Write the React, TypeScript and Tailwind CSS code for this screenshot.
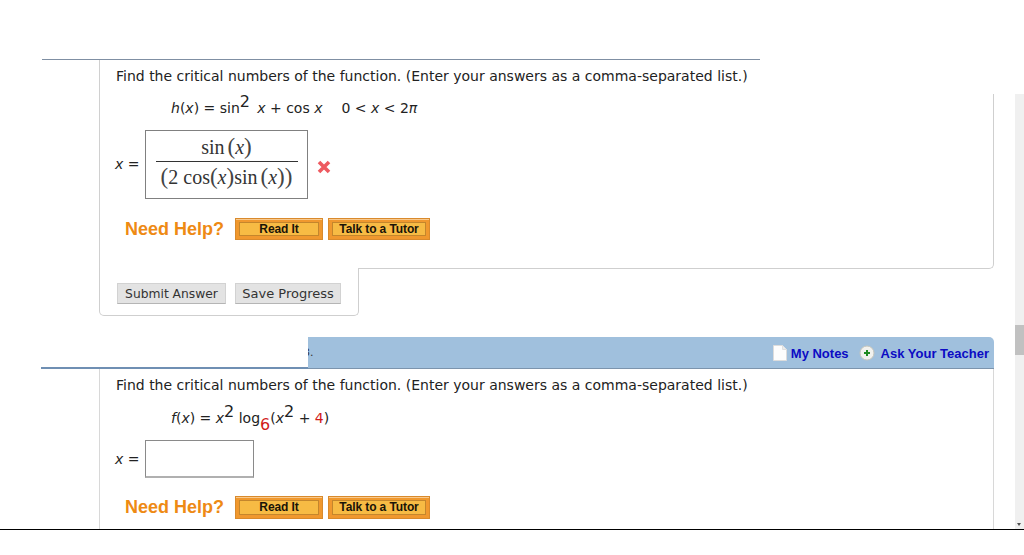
import React from 'react';

const sans = 'font-["DejaVu_Sans",sans-serif]';
const serif = 'font-["Liberation_Serif",serif]';
const arial = 'font-["Liberation_Sans",sans-serif]';

function OrangeButton({ label, width, height }: { label: string; width: string; height: string }) {
  return (
    <span className={`${width} ${height} flex p-[3px] bg-[#f0982e] border border-[#d98a2c] shadow-[inset_0_1px_0_#f8c98e]`}>
      <span className={`flex-1 flex items-center justify-center bg-[#f7bb44] border border-[#c4862c] text-[12px] tracking-[-0.1px] font-bold text-[#1a1408] ${arial}`}>
        {label}
      </span>
    </span>
  );
}

function NeedHelp({ height }: { height: string }) {
  return (
    <div className="flex items-center ml-[25px]">
      <span className={`w-[110px] mt-[1px] text-[18px] font-bold text-[#ee8a14] ${arial}`}>Need Help?</span>
      <OrangeButton label="Read It" width="w-[88px]" height={height} />
      <span className="w-[5px]" />
      <OrangeButton label="Talk to a Tutor" width="w-[102px]" height={height} />
    </div>
  );
}

function Prompt() {
  return (
    <p className={`ml-[16px] text-[14px] leading-[18px] text-[#222] ${sans}`}>
      Find the critical numbers of the function. (Enter your answers as a comma-separated list.)
    </p>
  );
}

function GreyButton({ label, width, size }: { label: string; width: string; size: string }) {
  return (
    <span className={`${width} ${size} h-[21px] flex items-center justify-center bg-[#e3e3e3] border border-[#d2d2d2] border-b-[#b5b5b5] text-[#333] ${sans}`}>
      {label}
    </span>
  );
}

function NoteIcon() {
  return (
    <svg width="16" height="18" viewBox="0 0 16 18">
      <path d="M1.5 1.5H10.5L14.5 5.5V16.5H1.5Z" fill="#fdfdfd" stroke="#dcdcdc" />
      <path d="M10.5 1.5V5.5H14.5" fill="#ececec" stroke="#e0e0e0" />
    </svg>
  );
}

function PlusIcon() {
  return (
    <svg width="16" height="16" viewBox="0 0 16 16">
      <circle cx="8" cy="8" r="7" fill="#f2f2ee" stroke="#c4c4bc" />
      <path d="M8 5V11M5 8H11" stroke="#1f8a1f" strokeWidth="2" />
    </svg>
  );
}

function Paren({ children }: { children: string }) {
  return <span className="text-[23px] font-light leading-[24px] text-[#444]">{children}</span>;
}

function Sup() {
  return <span className="text-[16px] leading-[20px] self-start -mt-[1px]">2</span>;
}

export default function App() {
  return (
    <div className="relative w-[1024px] h-[555px] overflow-hidden bg-white">
      {/* scrollbar */}
      <div className="absolute right-0 top-[94px] w-[9px] h-[435px] bg-[#f0f0f0]">
        <div className="mt-[231px] h-[30px] bg-[#c1c1c1]" />
        <div className="absolute bottom-[3px] left-[2px] w-0 h-0 border-x-[2px] border-x-transparent border-t-[3px] border-t-[#505050]" />
      </div>

      <div className="h-[59px]" />
      <div className="ml-[42px] w-[718px] h-px bg-[#7f8fa3]" />

      {/* question 1 */}
      <section className="relative ml-[99px] w-[895px]">
        <div className="absolute left-[259px] right-0 top-[34px] h-[175px] border-r border-b border-[#cfcfcf] rounded-br-[5px]" />
        <div className="h-[208px] border-l border-[#d0d0d0] pt-[7px]">
          <Prompt />
          <div className={`ml-[71px] mt-[8px] h-[26px] flex items-end text-[14px] text-[#222] ${sans}`}>
            <span className="italic">h</span>(<span className="italic">x</span>)&nbsp;= sin
            <Sup />
            &nbsp;&thinsp;<span className="italic">x</span>&nbsp;+ cos&nbsp;<span className="italic">x</span>
            <span className="w-[19px]" />
            0 &lt; <span className="italic">&nbsp;x&nbsp;</span> &lt; 2<span className="italic">π</span>
          </div>
          <div className="flex items-center ml-[15px] mt-[11px]">
            <span className={`w-[30px] text-[14px] text-[#222] ${sans}`}><span className="italic">x</span> =</span>
            <div className="w-[163px] h-[69px] border border-[#808080] flex flex-col items-center pt-[2px]">
              <span className={`text-[20px] leading-[28px] text-[#333] ${serif}`}>sin<span className="w-[3px] inline-block" /><Paren>(</Paren><span className="italic">x</span><Paren>)</Paren></span>
              <span className="w-[142px] h-px bg-[#333]" />
              <span className={`text-[20px] leading-[30px] text-[#333] whitespace-nowrap ${serif}`}><Paren>(</Paren>2 cos<Paren>(</Paren><span className="italic">x</span><Paren>)</Paren>sin<span className="w-[3px] inline-block" /><Paren>(</Paren><span className="italic">x</span><Paren>))</Paren></span>
            </div>
            <svg className="ml-[9px] mt-[4px]" width="14" height="14" viewBox="0 0 14 14">
              <path d="M2 2L12 12M12 2L2 12" stroke="#ee5a60" strokeWidth="3.6" />
            </svg>
          </div>
          <div className="mt-[16px]">
            <NeedHelp height="h-[22px]" />
          </div>
        </div>
        <div className="w-[260px] h-[48px] border-l border-r border-b border-[#cfcfcf] rounded-b-[5px] flex items-start gap-[9px] pl-[17px] pt-[15px]">
          <GreyButton label="Submit Answer" width="w-[109px]" size="text-[12.3px] pt-[1px]" />
          <GreyButton label="Save Progress" width="w-[106px]" size="text-[13px]" />
        </div>
      </section>

      {/* question 2 header */}
      <div className="mt-[21px] flex items-end">
        <div className="ml-[41px] w-[267px] h-[2px] bg-[#6f8fb3]" />
        <div className="w-[686px] h-[32px] bg-[#a0c0dd] border-b border-[#7c94ad] rounded-tr-[5px] flex items-center overflow-hidden">
          <span className={`-ml-[5px] mt-[2px] text-[11px] text-[#333] ${sans}`}>3.</span>
          <span className="flex-1" />
          <NoteIcon />
          <span className={`ml-[3px] mt-[2px] text-[13px] font-bold text-[#0b0bc4] ${arial}`}>My Notes</span>
          <span className="w-[10px]" />
          <PlusIcon />
          <span className={`ml-[6px] mr-[5px] mt-[2px] text-[13px] font-bold text-[#0b0bc4] ${arial}`}>Ask Your Teacher</span>
        </div>
      </div>

      {/* question 2 */}
      <section className="ml-[99px] w-[895px] h-[160px] border-l border-r border-[#d8d8d8] pt-[7px]">
        <Prompt />
        <div className={`ml-[71px] mt-[9px] h-[26px] flex items-end text-[14px] text-[#222] ${sans}`}>
          <span className="italic">f</span>(<span className="italic">x</span>)&nbsp;=&nbsp;<span className="italic">x</span>
          <Sup />
          &nbsp;log
          <span className="text-[16px] leading-[18px] -mb-[5px] text-[#d11a1a]">6</span>
          (<span className="italic">x</span>
          <Sup />
          &nbsp;+&nbsp;<span className="text-[#d11a1a]">4</span>)
        </div>
        <div className="flex items-center ml-[15px] mt-[11px]">
          <span className={`w-[30px] text-[14px] text-[#222] ${sans}`}><span className="italic">x</span> =</span>
          <div className="w-[109px] h-[38px] border border-[#8a8a8a] border-b-2 border-b-[#b0b0b0]" />
        </div>
        <div className="mt-[15px]">
          <NeedHelp height="h-[23px]" />
        </div>
      </section>

      <div className="absolute left-0 right-0 top-[529px] h-px bg-black" />
    </div>
  );
}
